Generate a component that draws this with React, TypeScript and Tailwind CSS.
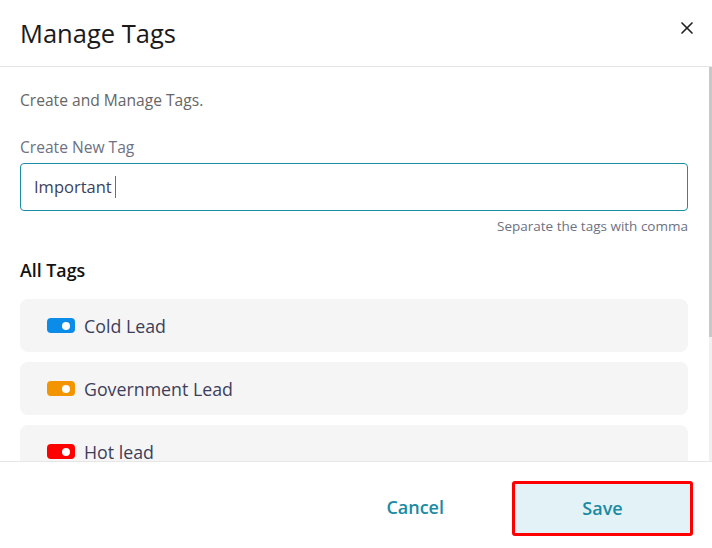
import { X } from "lucide-react";

const tags = [
  { name: "Cold Lead", color: "bg-[#0c8ce9]" },
  { name: "Government Lead", color: "bg-[#f29500]" },
  { name: "Hot lead", color: "bg-[#ff0000]" },
];

function TagIcon({ color }: { color: string }) {
  return (
    <span className={`flex h-[15px] w-[28px] items-center justify-end rounded-[4px] pr-[5px] ${color}`}>
      <span className="h-[8px] w-[8px] rounded-full bg-white" />
    </span>
  );
}

export default function App() {
  return (
    <div className="flex h-[548px] w-[712px] flex-col bg-white font-['Open_Sans',sans-serif]">
      {/* Header */}
      <div className="flex h-[67px] shrink-0 items-center justify-between border-b border-[#e6e6e6] pl-5 pr-[15px]">
        <h1 className="text-[25.5px] text-[#1a1a1a]">Manage Tags</h1>
        <button className="-mt-[10px] text-[#222]">
          <X size={20} strokeWidth={2} />
        </button>
      </div>

      {/* Body */}
      <div className="relative h-[394px] shrink-0 overflow-hidden">
        <div className="pl-5 pr-6 pt-[22px]">
          <p className="text-[15.6px] leading-[22px] text-[#666]">Create and Manage Tags.</p>

          <label className="mt-[25px] block text-[15.6px] leading-[22px] text-[#6e7183]">Create New Tag</label>
          <div className="mt-[5px] flex h-[48px] items-center rounded-[4px] border border-[#1c8ea3] px-[13px]">
            <span className="text-[16.5px] text-[#3d3f5a]">Important</span>
            <span className="ml-[3px] h-[22px] w-[1.5px] bg-[#1c8ea3]" />
          </div>
          <p className="mt-[6px] text-right text-[13.5px] leading-[18px] text-[#6e7183]">Separate the tags with comma</p>

          <h2 className="mt-[23px] text-[17.8px] leading-[24px] font-semibold text-[#111]">All Tags</h2>

          <div className="mt-[17px] flex flex-col gap-[10px]">
            {tags.map((t) => (
              <div key={t.name} className="flex h-[53px] items-center gap-[9px] rounded-[8px] bg-[#f5f5f5] pl-[27px]">
                <TagIcon color={t.color} />
                <span className="text-[17.8px] leading-[20px] text-[#3d3f5a]">{t.name}</span>
              </div>
            ))}
          </div>
        </div>

        {/* Scrollbar */}
        <div className="absolute right-0 top-0 h-full w-[3px] bg-[#f0f0f0]">
          <div className="h-[270px] w-full bg-[#c8c8c8]" />
        </div>
      </div>

      {/* Footer */}
      <div className="flex flex-1 items-start justify-end gap-[68px] border-t border-[#e6e6e6] pr-[19px] pt-[19px]">
        <button className="mt-[13px] text-[18px] font-semibold text-[#1b8aa3]">Cancel</button>
        <button className="h-[55px] w-[181px] rounded-[3px] border-[3px] border-[#ff0000] bg-[#e3f2f6] text-[18px] font-semibold text-[#1b8aa3]">
          Save
        </button>
      </div>
    </div>
  );
}
